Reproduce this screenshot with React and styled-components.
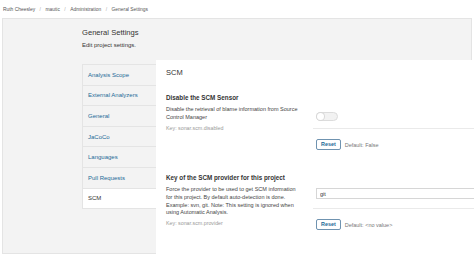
import React from "react";
import styled, { createGlobalStyle } from "styled-components";

const GlobalStyle = createGlobalStyle`
  html, body {
    margin: 0;
    padding: 0;
    background: #fff;
    overflow: hidden;
  }
  body {
    font-family: "Liberation Sans", Arial, sans-serif;
    color: #333;
  }
`;

const Page = styled.div`
  width: 474px;
  height: 257px;
  overflow: hidden;
`;

const Breadcrumbs = styled.div`
  display: flex;
  align-items: center;
  height: 18px;
  padding-left: 3px;
  font-size: 4.9px;
  color: #555;
`;

const Crumb = styled.span`
  color: #555;
`;

const Slash = styled.span`
  color: #aaa;
  margin: 0 4.5px;
`;

const Panel = styled.div`
  margin: 0 2px;
  height: 234px;
  background: #f3f3f3;
  border: 1px solid #e4e4e4;
  padding-left: 79px;
`;

const Header = styled.div`
  padding-top: 9px;
  height: 32px;
`;

const Title = styled.h1`
  margin: 0;
  font-size: 7.6px;
  line-height: 10px;
  font-weight: 400;
  color: #333;
`;

const Subtitle = styled.div`
  margin-top: 3px;
  font-size: 6px;
  line-height: 8px;
  color: #333;
`;

const Body = styled.div`
  display: flex;
  align-items: flex-start;
`;

const Nav = styled.ul`
  list-style: none;
  margin: 4px 0 0;
  padding: 0;
  width: 74px;
  flex-shrink: 0;
`;

const NavItem = styled.li`
  display: flex;
  align-items: center;
  height: 19.6px;
  padding-left: 5px;
  font-size: 6px;
  border: 1px solid #e4e4e4;
  border-top: none;
  border-right: none;
  background: ${(p) => (p.$active ? "#fff" : "transparent")};
  color: ${(p) => (p.$active ? "#333" : "#236a97")};
  &:first-child {
    border-top: 1px solid #e4e4e4;
  }
`;

const Card = styled.div`
  flex: 1;
  height: 197px;
  margin-right: -3px;
  background: #fff;
  padding-left: 10px;
`;

const CardTitle = styled.h2`
  margin: 0;
  padding: 8px 0 15px;
  font-size: 7.5px;
  line-height: 9px;
  font-weight: 400;
  color: #333;
`;

const Setting = styled.div`
  display: flex;
  height: 80px;
`;

const Left = styled.div`
  width: 140px;
  flex-shrink: 0;
  padding-top: 2px;
`;

const SettingName = styled.h3`
  margin: 0;
  font-size: 6.3px;
  line-height: 8px;
  font-weight: 700;
  color: #333;
`;

const Description = styled.div`
  margin-top: 4px;
  width: 136px;
  font-size: 5.5px;
  line-height: 7.8px;
  color: #444;
`;

const Key = styled.div`
  margin-top: 2px;
  font-size: 5.3px;
  line-height: 8px;
  color: #999;
`;

const Right = styled.div`
  flex: 1;
  margin-left: 7px;
  padding-top: 16px;
`;

const Control = styled.div`
  display: flex;
  align-items: ${(p) => (p.$center ? "center" : "flex-start")};
  height: 20px;
  padding-left: 3px;
  border-bottom: 1px solid #eaeaea;
`;

const Toggle = styled.div`
  position: relative;
  width: 22px;
  height: 9px;
  box-sizing: border-box;
  border: 1px solid #dcdcdc;
  border-radius: 5px;
  background: #f2f2f2;
  margin-top: -3px;
`;

const Knob = styled.span`
  position: absolute;
  left: 0;
  top: 0;
  width: 7px;
  height: 7px;
  border-radius: 50%;
  background: #fff;
  box-shadow: 0 0 0 1px #d8d8d8;
`;

const Input = styled.input`
  flex: 1;
  min-width: 0;
  height: 11px;
  box-sizing: border-box;
  border: 1px solid #d6d6d6;
  border-right: none;
  padding: 0 3px;
  font-family: "Liberation Sans", Arial, sans-serif;
  font-size: 5.5px;
  color: #333;
  outline: none;
`;

const Changes = styled.div`
  display: flex;
  align-items: center;
  padding: 10px 0 0 3px;
`;

const ResetButton = styled.button`
  height: 11px;
  padding: 0 4px;
  border: 1px solid #6f93b0;
  border-radius: 2px;
  background: #fff;
  font-family: "Liberation Sans", Arial, sans-serif;
  font-size: 5.4px;
  font-weight: 700;
  color: #236a97;
  line-height: 9px;
`;

const DefaultValue = styled.span`
  margin-left: 4px;
  font-size: 5.5px;
  color: #777;
`;

const navItems = [
  "Analysis Scope",
  "External Analyzers",
  "General",
  "JaCoCo",
  "Languages",
  "Pull Requests",
  "SCM",
];

const App = () => (
  <Page>
    <GlobalStyle />
    <Breadcrumbs>
      <Crumb>Ruth Cheesley</Crumb>
      <Slash>/</Slash>
      <Crumb>mautic</Crumb>
      <Slash>/</Slash>
      <Crumb>Administration</Crumb>
      <Slash>/</Slash>
      <Crumb>General Settings</Crumb>
    </Breadcrumbs>
    <Panel>
      <Header>
        <Title>General Settings</Title>
        <Subtitle>Edit project settings.</Subtitle>
      </Header>
      <Body>
        <Nav>
          {navItems.map((item) => (
            <NavItem key={item} $active={item === "SCM"}>
              {item}
            </NavItem>
          ))}
        </Nav>
        <Card>
          <CardTitle>SCM</CardTitle>
          <Setting>
            <Left>
              <SettingName>Disable the SCM Sensor</SettingName>
              <Description>
                Disable the retrieval of blame information from Source Control
                Manager
              </Description>
              <Key>Key: sonar.scm.disabled</Key>
            </Left>
            <Right>
              <Control $center>
                <Toggle>
                  <Knob />
                </Toggle>
              </Control>
              <Changes>
                <ResetButton>Reset</ResetButton>
                <DefaultValue>Default: False</DefaultValue>
              </Changes>
            </Right>
          </Setting>
          <Setting>
            <Left>
              <SettingName>Key of the SCM provider for this project</SettingName>
              <Description>
                Force the provider to be used to get SCM information for this
                project. By default auto-detection is done. Example: svn, git.
                Note: This setting is ignored when using Automatic Analysis.
              </Description>
              <Key>Key: sonar.scm.provider</Key>
            </Left>
            <Right>
              <Control>
                <Input defaultValue="git" />
              </Control>
              <Changes>
                <ResetButton>Reset</ResetButton>
                <DefaultValue>Default: &lt;no value&gt;</DefaultValue>
              </Changes>
            </Right>
          </Setting>
        </Card>
      </Body>
    </Panel>
  </Page>
);

export default App;
